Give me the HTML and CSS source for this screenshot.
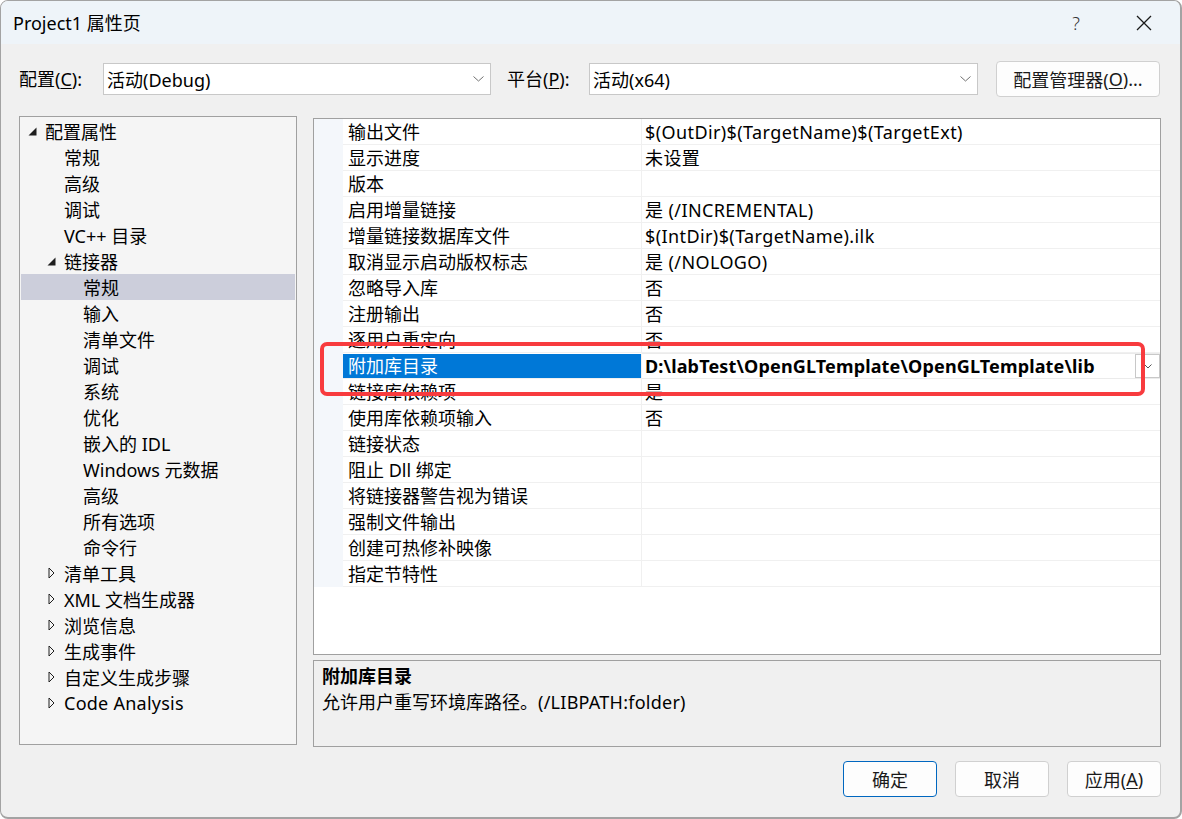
FILE: index.html
```html
<!DOCTYPE html>
<html lang="zh-CN">
<head>
<meta charset="utf-8">
<title>Project1 属性页</title>
<link rel="stylesheet" href="styles.css">
</head>
<body>
<div class="window">
  <div class="titlebar">
    <span class="title">Project1 属性页</span>
    <span class="help">?</span>
    <span class="close"><svg width="16" height="16" viewBox="0 0 16 16"><path d="M1 1 L15 15 M15 1 L1 15" stroke="#1a1a1a" stroke-width="1.3" fill="none"/></svg></span>
  </div>

  <div class="config-row">
    <span class="label lbl-config">配置(<u>C</u>):</span>
    <div class="combo combo-config"><span class="combo-text">活动(Debug)</span><svg class="chev" width="11" height="6" viewBox="0 0 11 6"><path d="M0.5 0.5 L5.5 5 L10.5 0.5" stroke="#707070" stroke-width="1" fill="none"/></svg></div>
    <span class="label lbl-platform">平台(<u>P</u>):</span>
    <div class="combo combo-platform"><span class="combo-text">活动(x64)</span><svg class="chev" width="11" height="6" viewBox="0 0 11 6"><path d="M0.5 0.5 L5.5 5 L10.5 0.5" stroke="#707070" stroke-width="1" fill="none"/></svg></div>
    <button class="btn btn-manager">配置管理器(<u>O</u>)...</button>
  </div>

  <div class="main">
    <div class="tree">
      <div class="node l0"><span class="exp"><svg class="tri-open" width="9" height="9" viewBox="0 0 9 9"><path d="M8.5 0.5 L8.5 8.5 L0.5 8.5 Z" fill="#1e1e1e"/></svg></span><span>配置属性</span></div>
      <div class="node l1"><span class="exp"></span><span>常规</span></div>
      <div class="node l1"><span class="exp"></span><span>高级</span></div>
      <div class="node l1"><span class="exp"></span><span>调试</span></div>
      <div class="node l1"><span class="exp"></span><span>VC++ 目录</span></div>
      <div class="node l1"><span class="exp"><svg class="tri-open" width="9" height="9" viewBox="0 0 9 9"><path d="M8.5 0.5 L8.5 8.5 L0.5 8.5 Z" fill="#1e1e1e"/></svg></span><span>链接器</span></div>
      <div class="node l2 selected"><span class="exp"></span><span>常规</span></div>
      <div class="node l2"><span class="exp"></span><span>输入</span></div>
      <div class="node l2"><span class="exp"></span><span>清单文件</span></div>
      <div class="node l2"><span class="exp"></span><span>调试</span></div>
      <div class="node l2"><span class="exp"></span><span>系统</span></div>
      <div class="node l2"><span class="exp"></span><span>优化</span></div>
      <div class="node l2"><span class="exp"></span><span>嵌入的 IDL</span></div>
      <div class="node l2"><span class="exp"></span><span>Windows 元数据</span></div>
      <div class="node l2"><span class="exp"></span><span>高级</span></div>
      <div class="node l2"><span class="exp"></span><span>所有选项</span></div>
      <div class="node l2"><span class="exp"></span><span>命令行</span></div>
      <div class="node l1"><span class="exp"><svg class="tri-closed" width="7" height="12" viewBox="0 0 7 12"><path d="M1 1 L6 6 L1 11 Z" fill="none" stroke="#1e1e1e" stroke-width="1"/></svg></span><span>清单工具</span></div>
      <div class="node l1"><span class="exp"><svg class="tri-closed" width="7" height="12" viewBox="0 0 7 12"><path d="M1 1 L6 6 L1 11 Z" fill="none" stroke="#1e1e1e" stroke-width="1"/></svg></span><span>XML 文档生成器</span></div>
      <div class="node l1"><span class="exp"><svg class="tri-closed" width="7" height="12" viewBox="0 0 7 12"><path d="M1 1 L6 6 L1 11 Z" fill="none" stroke="#1e1e1e" stroke-width="1"/></svg></span><span>浏览信息</span></div>
      <div class="node l1"><span class="exp"><svg class="tri-closed" width="7" height="12" viewBox="0 0 7 12"><path d="M1 1 L6 6 L1 11 Z" fill="none" stroke="#1e1e1e" stroke-width="1"/></svg></span><span>生成事件</span></div>
      <div class="node l1"><span class="exp"><svg class="tri-closed" width="7" height="12" viewBox="0 0 7 12"><path d="M1 1 L6 6 L1 11 Z" fill="none" stroke="#1e1e1e" stroke-width="1"/></svg></span><span>自定义生成步骤</span></div>
      <div class="node l1"><span class="exp"><svg class="tri-closed" width="7" height="12" viewBox="0 0 7 12"><path d="M1 1 L6 6 L1 11 Z" fill="none" stroke="#1e1e1e" stroke-width="1"/></svg></span><span class="lat">Code Analysis</span></div>
    </div>

    <div class="right">
      <div class="grid">
        <div class="row"><div class="gut"></div><div class="name">输出文件</div><div class="val">$(OutDir)$(TargetName)$(TargetExt)</div></div>
        <div class="row"><div class="gut"></div><div class="name">显示进度</div><div class="val">未设置</div></div>
        <div class="row"><div class="gut"></div><div class="name">版本</div><div class="val"></div></div>
        <div class="row"><div class="gut"></div><div class="name">启用增量链接</div><div class="val">是 (/INCREMENTAL)</div></div>
        <div class="row"><div class="gut"></div><div class="name">增量链接数据库文件</div><div class="val">$(IntDir)$(TargetName).ilk</div></div>
        <div class="row"><div class="gut"></div><div class="name">取消显示启动版权标志</div><div class="val">是 (/NOLOGO)</div></div>
        <div class="row"><div class="gut"></div><div class="name">忽略导入库</div><div class="val">否</div></div>
        <div class="row"><div class="gut"></div><div class="name">注册输出</div><div class="val">否</div></div>
        <div class="row"><div class="gut"></div><div class="name">逐用户重定向</div><div class="val">否</div></div>
        <div class="row sel"><div class="gut"></div><div class="name">附加库目录</div><div class="val"><span class="edit">D:\labTest\OpenGLTemplate\OpenGLTemplate\lib</span><span class="dd"><svg width="8" height="5" viewBox="0 0 8 5"><path d="M0.5 0.5 L4 4 L7.5 0.5" stroke="#555" stroke-width="1" fill="none"/></svg></span></div></div>
        <div class="row"><div class="gut"></div><div class="name">链接库依赖项</div><div class="val">是</div></div>
        <div class="row"><div class="gut"></div><div class="name">使用库依赖项输入</div><div class="val">否</div></div>
        <div class="row"><div class="gut"></div><div class="name">链接状态</div><div class="val"></div></div>
        <div class="row"><div class="gut"></div><div class="name">阻止 Dll 绑定</div><div class="val"></div></div>
        <div class="row"><div class="gut"></div><div class="name">将链接器警告视为错误</div><div class="val"></div></div>
        <div class="row"><div class="gut"></div><div class="name">强制文件输出</div><div class="val"></div></div>
        <div class="row"><div class="gut"></div><div class="name">创建可热修补映像</div><div class="val"></div></div>
        <div class="row"><div class="gut"></div><div class="name">指定节特性</div><div class="val"></div></div>
        <div class="highlight"></div>
      </div>
      <div class="desc">
        <div class="desc-title">附加库目录</div>
        <div class="desc-text">允许用户重写环境库路径。<span class="lat">(/LIBPATH:folder)</span></div>
      </div>
    </div>
  </div>

  <div class="buttons">
    <button class="btn btn-ok">确定</button>
    <button class="btn">取消</button>
    <button class="btn">应用(<u>A</u>)</button>
  </div>
</div>
</body>
</html>
```

FILE: styles.css
```css
* {
  box-sizing: border-box;
}

html,
body {
  margin: 0;
  padding: 0;
  background: #ffffff;
}

body {
  font-family: "Noto Sans", "Noto Sans CJK SC", sans-serif;
  font-size: 18px;
  color: #000;
}

u {
  text-decoration: underline;
  text-underline-offset: 2px;
  text-decoration-thickness: 1px;
}

.lat {
  letter-spacing: 0.25px;
}

.window {
  width: 1182px;
  height: 819px;
  background: #f0f0f0;
  border: 1px solid #a3a3a3;
  border-right-width: 2px;
  border-bottom-width: 2px;
  border-radius: 8px;
  overflow: hidden;
  display: flex;
  flex-direction: column;
}

/* title bar */
.titlebar {
  height: 43px;
  flex: none;
  background: #eef4f9;
  display: flex;
  align-items: center;
  padding-left: 12px;
  padding-right: 28px;
}

.title {
  flex: 1;
  line-height: 26px;
}

.help {
  width: 20px;
  text-align: center;
  color: #333;
  font-weight: 300;
}

.close {
  margin-left: 50px;
  width: 16px;
  height: 16px;
  display: flex;
}

/* config row */
.config-row {
  margin-top: 17px;
  height: 36px;
  flex: none;
  display: flex;
  align-items: center;
  padding-left: 18px;
}

.label {
  line-height: 26px;
}

.lbl-config {
  width: 84px;
}

.lbl-platform {
  width: 82px;
  margin-left: 16px;
}

.combo {
  height: 32px;
  background: #fff;
  border: 1px solid #c8c8c8;
  display: flex;
  align-items: center;
  padding-left: 3px;
  padding-right: 6px;
}

.combo-config {
  width: 388px;
}

.combo-platform {
  width: 389px;
}

.combo-text {
  flex: 1;
}

.chev {
  display: block;
}

.btn {
  font-family: inherit;
  font-size: 18px;
  color: #1a1a1a;
  background: #fdfdfd;
  border: 1px solid #d0d0d0;
  border-radius: 4px;
  height: 36px;
  padding: 0;
  margin: 0;
  display: flex;
  align-items: center;
  justify-content: center;
}

.btn-manager {
  width: 164px;
  margin-left: 18px;
}

/* main */
.main {
  margin-top: 19px;
  height: 631px;
  flex: none;
  display: flex;
  padding-left: 18px;
  gap: 16px;
}

.tree {
  width: 278px;
  height: 629px;
  background: #f5f5f5;
  border: 1px solid #a0a0a0;
  padding: 1px;
}

.node {
  height: 26px;
  display: flex;
  align-items: center;
  white-space: nowrap;
}

.node.l0 {
  padding-left: 5px;
}

.node.l1 {
  padding-left: 24px;
}

.node.l2 {
  padding-left: 43px;
}

.node.selected {
  background: #cccedb;
}

.exp {
  width: 19px;
  height: 26px;
  flex: none;
  display: flex;
  align-items: center;
}

.tri-open {
  margin-left: 2px;
  margin-top: 1px;
}

.tri-closed {
  margin-left: 3px;
}

.right {
  width: 848px;
  margin-top: 2px;
  display: flex;
  flex-direction: column;
  gap: 5px;
}

.grid {
  position: relative;
  height: 537px;
  background: #fff;
  border: 1px solid #a0a0a0;
}

.row {
  height: 26px;
  display: grid;
  grid-template-columns: 29px 299px 1fr;
}

.gut {
  background: #f4f7fb;
}

.name,
.val {
  border-bottom: 1px solid #f0f0f0;
  padding-top: 1px;
  line-height: 24px;
  white-space: nowrap;
  overflow: hidden;
}

.name {
  padding-left: 5px;
  border-right: 1px solid #f0f0f0;
}

.val {
  padding-left: 3px;
  display: flex;
  align-items: center;
  letter-spacing: 0.4px;
}

.row.sel .name {
  background: #0078d7;
  color: #fff;
  border-top: 1px solid #fff;
  padding-top: 0;
}

.row.sel .val {
  border-top: 1px solid #ebebeb;
  border-bottom: 1px solid #ebebeb;
  padding-top: 0;
  padding-right: 0;
}

.edit {
  flex: 1;
  font-weight: 700;
  letter-spacing: 0.15px;
}

.dd {
  width: 25px;
  height: 24px;
  border: 1px solid #c8c8c8;
  background: #fff;
  display: flex;
  align-items: center;
  justify-content: center;
}

.highlight {
  position: absolute;
  left: 6px;
  top: 223px;
  width: 825px;
  height: 54px;
  border: 4px solid #f83b3e;
  border-radius: 7px;
  pointer-events: none;
}

.desc {
  height: 87px;
  background: #f0f0f0;
  border: 1px solid #a0a0a0;
  padding: 2px 8px 0;
}

.desc-title {
  font-weight: 700;
  line-height: 26px;
}

.desc-text {
  line-height: 26px;
}

/* bottom buttons */
.buttons {
  margin-top: 14px;
  height: 36px;
  flex: none;
  display: flex;
  justify-content: flex-end;
  gap: 18px;
  padding-right: 19px;
}

.buttons .btn {
  width: 94px;
}

.btn-ok {
  border-color: #0067c0;
}
```
